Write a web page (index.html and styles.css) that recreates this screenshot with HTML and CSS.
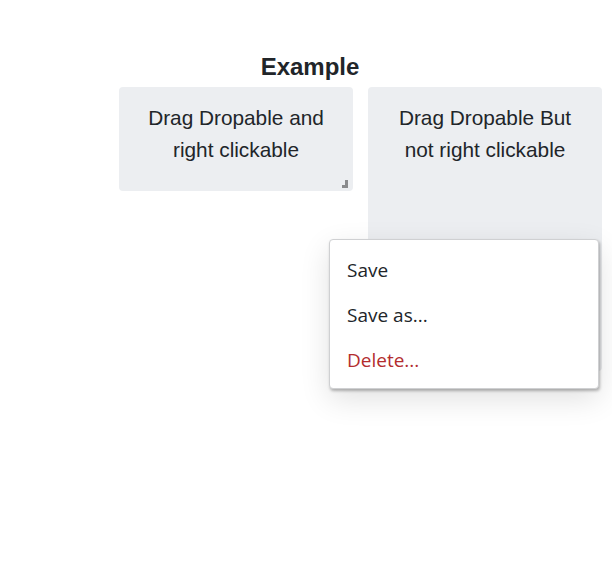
FILE: index.html
```html
<!DOCTYPE html>
<html>
<head>
<meta charset="utf-8">
<link rel="stylesheet" href="styles.css">
</head>
<body>
<div class="page">
  <h2 class="title">Example</h2>
  <div class="cards">
    <div class="card card-left">
      Drag Dropable and right clickable
      <svg class="grip" width="6" height="8" viewBox="0 0 6 8"><path d="M3 0H6V8H0V5H3Z" fill="#8a8b8d"/></svg>
    </div>
    <div class="card card-right">
      Drag Dropable But not right clickable
    </div>
  </div>
  <ul class="menu">
    <li class="menu-item">Save</li>
    <li class="menu-item">Save as...</li>
    <li class="menu-item danger">Delete...</li>
  </ul>
</div>
</body>
</html>
```
FILE: styles.css
```css
html, body {
  margin: 0;
  padding: 0;
  background: #ffffff;
}
.page {
  position: relative;
  width: 612px;
  height: 576px;
  font-family: "Liberation Sans", Arial, sans-serif;
  color: #212529;
}
.title {
  margin: 0;
  padding-top: 53px;
  padding-left: 8px;
  font-size: 24px;
  font-weight: bold;
  line-height: 28px;
  text-align: center;
  height: 34px;
}
.cards {
  display: flex;
  gap: 15px;
  padding-left: 119px;
  align-items: flex-start;
}
.card {
  position: relative;
  box-sizing: border-box;
  width: 234px;
  background: #eceef1;
  border-radius: 4px;
  font-size: 20.8px;
  line-height: 32px;
  text-align: center;
  padding: 15px 20px 25px;
}
.card-left {
  height: 104px;
}
.card-right {
  height: 284px;
}
.grip {
  position: absolute;
  right: 5px;
  bottom: 3px;
}
.menu {
  position: absolute;
  left: 329px;
  top: 239px;
  box-sizing: border-box;
  width: 270px;
  height: 150px;
  margin: 0;
  padding: 8px 0 6px;
  list-style: none;
  background: #ffffff;
  border: 1px solid #cfd0d2;
  border-radius: 4px;
  box-shadow: 1px 2px 3px rgba(0, 0, 0, 0.28), 0 10px 30px rgba(0, 0, 0, 0.12);
  font-family: "Open Sans", "Noto Sans", sans-serif;
  font-size: 19px;
}
.menu-item {
  height: 45px;
  line-height: 45px;
  padding-left: 17px;
  color: #212529;
}
.menu-item.danger {
  color: #b32d2e;
}
```
